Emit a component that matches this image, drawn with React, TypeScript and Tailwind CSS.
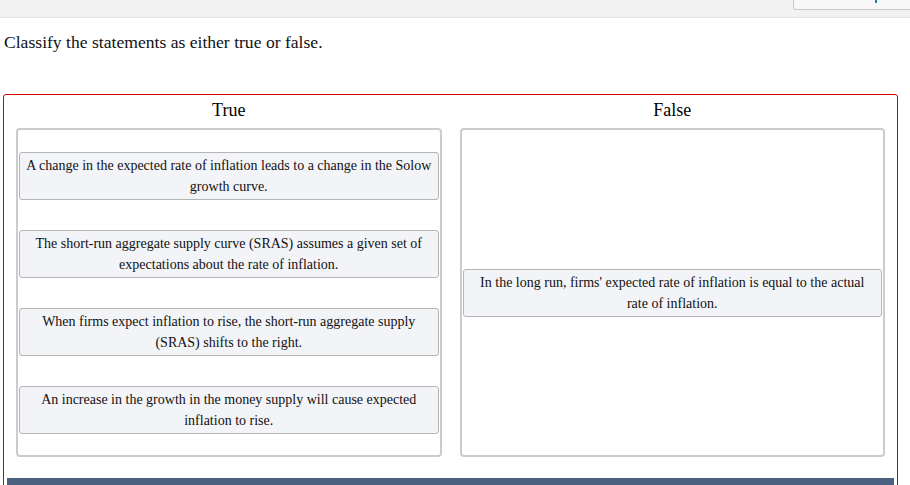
const trueItems = [
  "A change in the expected rate of inflation leads to a change in the Solow growth curve.",
  "The short-run aggregate supply curve (SRAS) assumes a given set of expectations about the rate of inflation.",
  "When firms expect inflation to rise, the short-run aggregate supply (SRAS) shifts to the right.",
  "An increase in the growth in the money supply will cause expected inflation to rise.",
]

const falseItems = [
  "In the long run, firms' expected rate of inflation is equal to the actual rate of inflation.",
]

function Card({ text }: { text: string }) {
  return (
    <div className="mx-[1px] rounded-[3px] border border-[#b5b5b5] bg-[#f3f4f8] px-[6px] py-[2px] text-center text-[14px] leading-[21px] text-[#111]">
      {text}
    </div>
  )
}

export default function App() {
  return (
    <div className="relative h-[485px] w-[910px] overflow-hidden bg-white font-['Liberation_Serif'] text-black">
      <div className="flex h-[18px] justify-end border-b border-[#e6e6e6] bg-[#f2f2f2]">
        <div className="relative mr-[-10px] h-[10px] w-[127px] rounded-bl-[3px] border border-t-0 border-[#c8c8c8] bg-[#f8f8f8]">
          <div className="absolute left-[81px] top-0 h-[3px] w-[2px] bg-[#1a7fa8]" />
        </div>
      </div>

      <p className="mt-[11px] pl-[4px] text-[17.6px] leading-[26px] text-[#111]">
        Classify the statements as either true or false.
      </p>

      <div className="ml-[3px] mt-[39px] h-[420px] w-[895px] rounded-[3px] border border-[#d40000] px-[12px] pt-[3px]">
        <div className="grid grid-cols-2 gap-[18px]">
          <div className="text-center text-[18px] leading-[24px]">True</div>
          <div className="text-center text-[18px] leading-[24px]">False</div>
        </div>
        <div className="mt-[6px] grid grid-cols-2 gap-[18px]">
          <div className="flex h-[329px] flex-col gap-[30px] rounded-[4px] border-2 border-[#cccccc] pt-[22px]">
            {trueItems.map((t) => (
              <Card key={t} text={t} />
            ))}
          </div>
          <div className="flex h-[329px] flex-col justify-center rounded-[4px] border-2 border-[#cccccc]">
            {falseItems.map((t) => (
              <Card key={t} text={t} />
            ))}
          </div>
        </div>
        <div className="mx-[-9px] mt-[21px] h-[10px] bg-[#4b6180]" />
      </div>
    </div>
  )
}
